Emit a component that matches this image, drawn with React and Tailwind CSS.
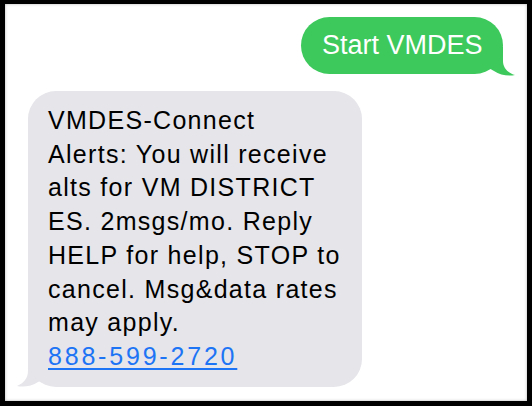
import React from 'react'

const lines = [
  "VMDES-Connect",
  "Alerts: You will receive",
  "alts for VM DISTRICT",
  "ES. 2msgs/mo. Reply",
  "HELP for help, STOP to",
  "cancel. Msg&data rates",
  "may apply.",
]

const App = () => {
  return (
    <div className="w-[532px] h-[406px] bg-black pt-[4px] pl-[5px] pr-[5px] pb-[5px] font-['Liberation_Sans',Arial,sans-serif]">
      <div className="w-full h-full bg-white shadow-[inset_0_0_3px_rgba(0,0,0,0.3)] flex flex-col">
        {/* outgoing */}
        <div className="self-end mt-[13px] mr-[24px] relative">
          <div className="relative z-10 h-[57px] w-[202px] rounded-full bg-[#3dc95c] pl-[21px] flex items-center text-white text-[27px] whitespace-nowrap">
            Start VMDES
          </div>
          <svg className="absolute left-[180px] top-[30px] z-0" width="40" height="30" viewBox="0 0 40 30">
            <path d="M6 0 H22 V14 C22 21 27 26 34 28 C27 29.5 19 28 13 24 L6 20 Z" fill="#3dc95c" />
          </svg>
        </div>

        {/* incoming */}
        <div className="ml-[23px] mt-[17px] relative w-[334px]">
          <div className="relative z-10 rounded-[28px] bg-[#e5e5ea] pl-[20px] pt-[13px] pb-[13px] text-[25px] leading-[33.7px] tracking-[1.3px] text-black">
            {lines.map((l, i) => (
              <div key={i} className="whitespace-nowrap">{l}</div>
            ))}
            <a href="#" className="block whitespace-nowrap tracking-[2.8px] text-[#1d74f5] underline decoration-[1.5px] underline-offset-[3px]">888-599-2720</a>
          </div>
          <svg className="absolute left-[-14px] bottom-0 z-0" width="40" height="30" viewBox="0 0 40 30">
            <path d="M34 0 H14 V14 C14 21 10 26 3 29 C10 30.5 18 29 24 25 L34 20 Z" fill="#e5e5ea" />
          </svg>
        </div>
      </div>
    </div>
  )
}
export default App
